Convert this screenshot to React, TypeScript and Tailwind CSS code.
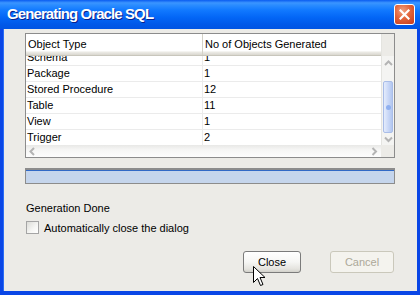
import { useState } from 'react'

const rows = [
  { type: 'Schema', count: '1' },
  { type: 'Package', count: '1' },
  { type: 'Stored Procedure', count: '12' },
  { type: 'Table', count: '11' },
  { type: 'View', count: '1' },
  { type: 'Trigger', count: '2' },
]

function Chevron({ dir }: { dir: 'up' | 'down' | 'left' | 'right' }) {
  const d = {
    up: 'M1 5 L4.5 1.5 L8 5',
    down: 'M1 1.5 L4.5 5 L8 1.5',
    left: 'M5 1 L1.5 4.5 L5 8',
    right: 'M1.5 1 L5 4.5 L1.5 8',
  }[dir]
  const vertical = dir === 'up' || dir === 'down'
  return (
    <svg width={vertical ? 9 : 7} height={vertical ? 7 : 9} viewBox={vertical ? '0 0 9 7' : '0 0 7 9'}>
      <path d={d} fill="none" stroke="#b4b4b4" strokeWidth={2} />
    </svg>
  )
}

export default function App() {
  const [autoClose, setAutoClose] = useState(false)

  return (
    <div className="relative w-[420px] h-[295px] flex flex-col bg-[#0a46e6] font-['Liberation_Sans',Arial,sans-serif] text-[11px] text-black select-none">
      <header className="h-[29px] shrink-0 flex items-center justify-between pl-[7px] pr-[5px] bg-[linear-gradient(180deg,#0a5cf0_0%,#3b95ff_10%,#2a8cff_18%,#1179ff_35%,#0366f6_60%,#0058e8_85%,#0054e3_100%)]">
        <h1 className="text-white font-bold text-[15px] tracking-[-0.9px] [text-shadow:1px_1px_0_#0a1f8a]">
          Generating Oracle SQL
        </h1>
        <button className="w-[21px] h-[21px] rounded-[3px] border border-white flex items-center justify-center bg-[radial-gradient(circle_at_40%_30%,#f0a080_0%,#e2643a_45%,#c5391a_100%)]">
          <svg width="11" height="11" viewBox="0 0 11 11">
            <path d="M1.5 1.5 L9.5 9.5 M9.5 1.5 L1.5 9.5" stroke="white" strokeWidth={2.2} strokeLinecap="square" />
          </svg>
        </button>
      </header>

      <div className="flex-1 mx-[3px] mb-[4px] bg-[#ecebe7] flex flex-col border-l border-[#2a6cf5]">
        <div className="mt-[4px] ml-[21px] w-[370px] h-[125px] border border-[#8c8c8c] bg-white flex flex-col">
          <div className="flex flex-1 min-h-0">
            <div className="flex-1 flex flex-col min-w-0">
              <div className="h-[22px] shrink-0 flex bg-[linear-gradient(180deg,#ffffff_0%,#ffffff_80%,#ecebe6_86%,#d9d7cf_100%)] border-b border-[#c8c6bc]">
                <div className="w-[177px] pl-[2px] flex items-center border-r border-[#d4d2c8]">Object Type</div>
                <div className="flex-1 pl-[2px] flex items-center">No of Objects Generated</div>
              </div>
              <div className="flex-1 overflow-hidden">
                <div className="-mt-[6px]">
                  {rows.map((r) => (
                    <div key={r.type} className="h-[16px] flex border-b border-[#ebebeb]">
                      <div className="w-[177px] pl-[1px] flex items-center border-r border-[#ebebeb]">{r.type}</div>
                      <div className="flex-1 pl-[1px] flex items-center">{r.count}</div>
                    </div>
                  ))}
                </div>
              </div>
            </div>
            <div className="w-[13px] shrink-0 flex flex-col bg-[#f4f4f2] border-l border-[#e4e4e0]">
              <div className="h-[22px] bg-[#ecebe7]" />
              <div className="h-[15px] flex items-center justify-center">
                <Chevron dir="up" />
              </div>
              <div className="h-[10px]" />
              <div className="h-[52px] mx-[1px] rounded-[2px] border border-[#a9bde8] bg-[linear-gradient(90deg,#e4ecfc_0%,#cbd9f7_50%,#b3c7f0_100%)] flex items-center justify-center">
                <div className="w-[5px] h-[5px] rounded-full bg-[#8fb0f0]" />
              </div>
              <div className="flex-1 flex items-center justify-center">
                <Chevron dir="down" />
              </div>
            </div>
          </div>
          <div className="h-[12px] shrink-0 flex">
            <div className="flex-1 flex items-center justify-between px-[3px] bg-[linear-gradient(180deg,#e8e8e6_0%,#f6f6f5_40%,#fdfdfd_100%)]">
              <Chevron dir="left" />
              <Chevron dir="right" />
            </div>
            <div className="w-[13px] bg-[#ecebe7]" />
          </div>
        </div>

        <div className="mt-[10px] ml-[21px] w-[370px] h-[16px] border border-[#8c8c8c] border-t-2 bg-[#c5d5ec] shadow-[inset_0_1px_0_#3169c6]" />

        <div className="mt-[16px] ml-[22px]">Generation Done</div>

        <label className="mt-[3px] ml-[22px] flex items-center gap-[5px]">
          <input
            type="checkbox"
            checked={autoClose}
            onChange={(e) => setAutoClose(e.target.checked)}
            className="appearance-none w-[13px] h-[13px] border border-[#a5a5a5] bg-[linear-gradient(135deg,#dcdcd8_0%,#f6f6f4_60%,#ffffff_100%)] m-0"
          />
          Automatically close the dialog
        </label>

        <div className="mt-auto mb-[18px] flex justify-end gap-[29px] pr-[23px]">
          <button className="w-[58px] h-[22px] rounded-[3px] border border-[#7b7b7b] bg-[linear-gradient(180deg,#ffffff_0%,#f6f6f4_50%,#e4e3de_85%,#d2d1cb_100%)] text-[11px]">
            Close
          </button>
          <button disabled className="w-[64px] h-[22px] rounded-[3px] border border-[#cac8bb] bg-[#f4f3ee] text-[11px] text-[#aca899]">
            Cancel
          </button>
        </div>
      </div>

      <svg className="absolute left-[253px] top-[266px]" width="13" height="21" viewBox="0 0 13 21">
        <path d="M0.5 0.5 L0.5 16.5 L4.5 12.5 L7.5 19.5 L10 18.5 L7 11.5 L12 11.5 Z" fill="white" stroke="black" strokeWidth={1} />
      </svg>
    </div>
  )
}
